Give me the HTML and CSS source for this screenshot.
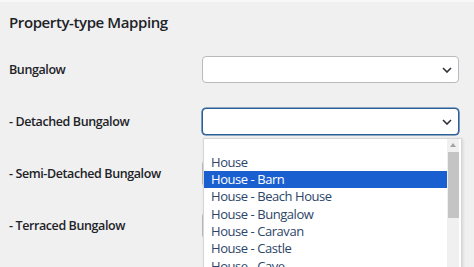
FILE: index.html
```html
<!DOCTYPE html>
<html>
<head>
<meta charset="utf-8">
<link rel="stylesheet" href="styles.css">
</head>
<body>
<div class="page">
  <h2 class="title">Property-type Mapping</h2>
  <div class="rows">
    <div class="row">
      <span class="label">Bungalow</span>
      <div class="select"><svg class="chev" width="10" height="6" viewBox="0 0 10 6"><path d="M1 1 L5 5 L9 1" fill="none" stroke="#2c3338" stroke-width="1.6"/></svg></div>
    </div>
    <div class="row">
      <span class="label">- Detached Bungalow</span>
      <div class="select focused"><svg class="chev" width="10" height="6" viewBox="0 0 10 6"><path d="M1 1 L5 5 L9 1" fill="none" stroke="#2c3338" stroke-width="1.6"/></svg></div>
    </div>
    <div class="row">
      <span class="label">- Semi-Detached Bungalow</span>
      <div class="select"></div>
    </div>
    <div class="row">
      <span class="label">- Terraced Bungalow</span>
      <div class="select"></div>
    </div>
  </div>
  <div class="dropdown">
    <ul class="options">
      <li class="blank"></li>
      <li>House</li>
      <li class="selected">House - Barn</li>
      <li>House - Beach House</li>
      <li>House - Bungalow</li>
      <li>House - Caravan</li>
      <li>House - Castle</li>
      <li>House - Cave</li>
    </ul>
    <div class="scrollbar">
      <div class="arrow"></div>
      <div class="thumb"></div>
    </div>
  </div>
</div>
</body>
</html>
```
FILE: styles.css
```css
html, body {
  margin: 0;
  padding: 0;
  background: #f0f0f1;
  overflow: hidden;
}
.page {
  position: relative;
  width: 474px;
  height: 267px;
  padding: 0 0 0 9px;
  box-sizing: border-box;
  font-family: "Open Sans", "Noto Sans", sans-serif;
  color: #1d2327;
  border-top: 2px solid #f7f7f8;
}
.title {
  margin: 0;
  padding-top: 10px;
  font-size: 15px;
  font-weight: 600;
  letter-spacing: -0.4px;
  line-height: 20px;
  height: 20px;
}
.rows {
  margin-top: 24px;
  display: flex;
  flex-direction: column;
  gap: 25px;
}
.row {
  display: flex;
  align-items: center;
  height: 27px;
}
.label {
  width: 193px;
  font-size: 12.5px;
  font-weight: 600;
  letter-spacing: -0.4px;
}
.select {
  position: relative;
  width: 257px;
  height: 27px;
  box-sizing: border-box;
  border: 1px solid #b8babd;
  border-radius: 4px;
  background: #fff;
}
.select.focused {
  border-color: #2a5f94;
  box-shadow: 0 0 0 0.6px #2a5f94;
}
.chev {
  position: absolute;
  right: 6px;
  top: 10px;
}
.dropdown {
  position: absolute;
  left: 203px;
  top: 136px;
  width: 259px;
  height: 140px;
  box-sizing: border-box;
  background: #fff;
  border: 1px solid #d6d6d6;
  box-shadow: 1px 1px 3px rgba(0,0,0,0.12);
  display: flex;
}
.options {
  list-style: none;
  margin: 0;
  padding: 0;
  flex: 1;
  font-size: 13px;
  letter-spacing: -0.45px;
  color: #2c4568;
}
.options li {
  height: 17.4px;
  line-height: 17.4px;
  padding-left: 7px;
  white-space: nowrap;
}
.options li.blank {
  height: 14.5px;
}
.options li.selected {
  background: #1a5fd0;
  color: #fff;
}
.scrollbar {
  width: 12px;
  margin-right: 2px;
  background: #f0f0f0;
  display: flex;
  flex-direction: column;
  align-items: center;
}
.arrow {
  margin-top: 4px;
  width: 0;
  height: 0;
  border-left: 3px solid transparent;
  border-right: 3px solid transparent;
  border-bottom: 4px solid #a3a3a3;
}
.thumb {
  margin-top: 5px;
  width: 11px;
  height: 66px;
  background: #c4c4c4;
}
```
